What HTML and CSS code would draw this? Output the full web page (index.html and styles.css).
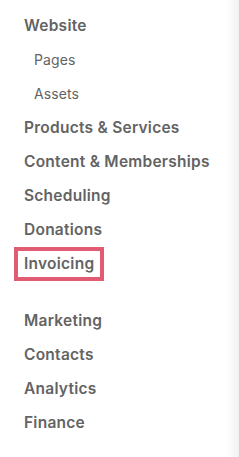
FILE: index.html
```html
<!DOCTYPE html>
<html lang="en">
<head>
    <meta charset="UTF-8">
    <meta name="viewport" content="width=device-width, initial-scale=1.0">
    <title>Menu</title>
    <link rel="stylesheet" href="styles.css">
</head>
<body>
    <nav class="sidebar">
        <ul class="menu">
            <li class="item">Website</li>
            <li class="item sub">Pages</li>
            <li class="item sub">Assets</li>
            <li class="item">Products &amp; Services</li>
            <li class="item">Content &amp; Memberships</li>
            <li class="item">Scheduling</li>
            <li class="item">Donations</li>
            <li class="item"><span class="marked">Invoicing</span></li>
        </ul>
        <ul class="menu second">
            <li class="item">Marketing</li>
            <li class="item">Contacts</li>
            <li class="item">Analytics</li>
            <li class="item">Finance</li>
        </ul>
    </nav>
</body>
</html>
```

FILE: styles.css
```css
html, body { margin: 0; padding: 0; background: #fff; }
body { width: 239px; height: 457px; overflow: hidden; font-family: Inter, "Liberation Sans", sans-serif; }
.sidebar { height: 457px; padding: 9px 0 0 24px; box-sizing: border-box; background: linear-gradient(to right, #fff 0, #fff 226px, #f2f2f2 239px); }
.menu { list-style: none; margin: 0; padding: 0; }
.second { margin-top: 23px; }
.item { height: 34px; line-height: 34px; font-size: 15.5px; letter-spacing: 0.25px; font-weight: 600; color: #636363; white-space: nowrap; }
.sub { padding-left: 10px; font-size: 14px; letter-spacing: 0.1px; font-weight: 400; }
.marked { display: inline-block; margin-left: -10px; padding: 0 6px; height: 26px; line-height: 26px; border: 4px solid #e25b72; }
```
